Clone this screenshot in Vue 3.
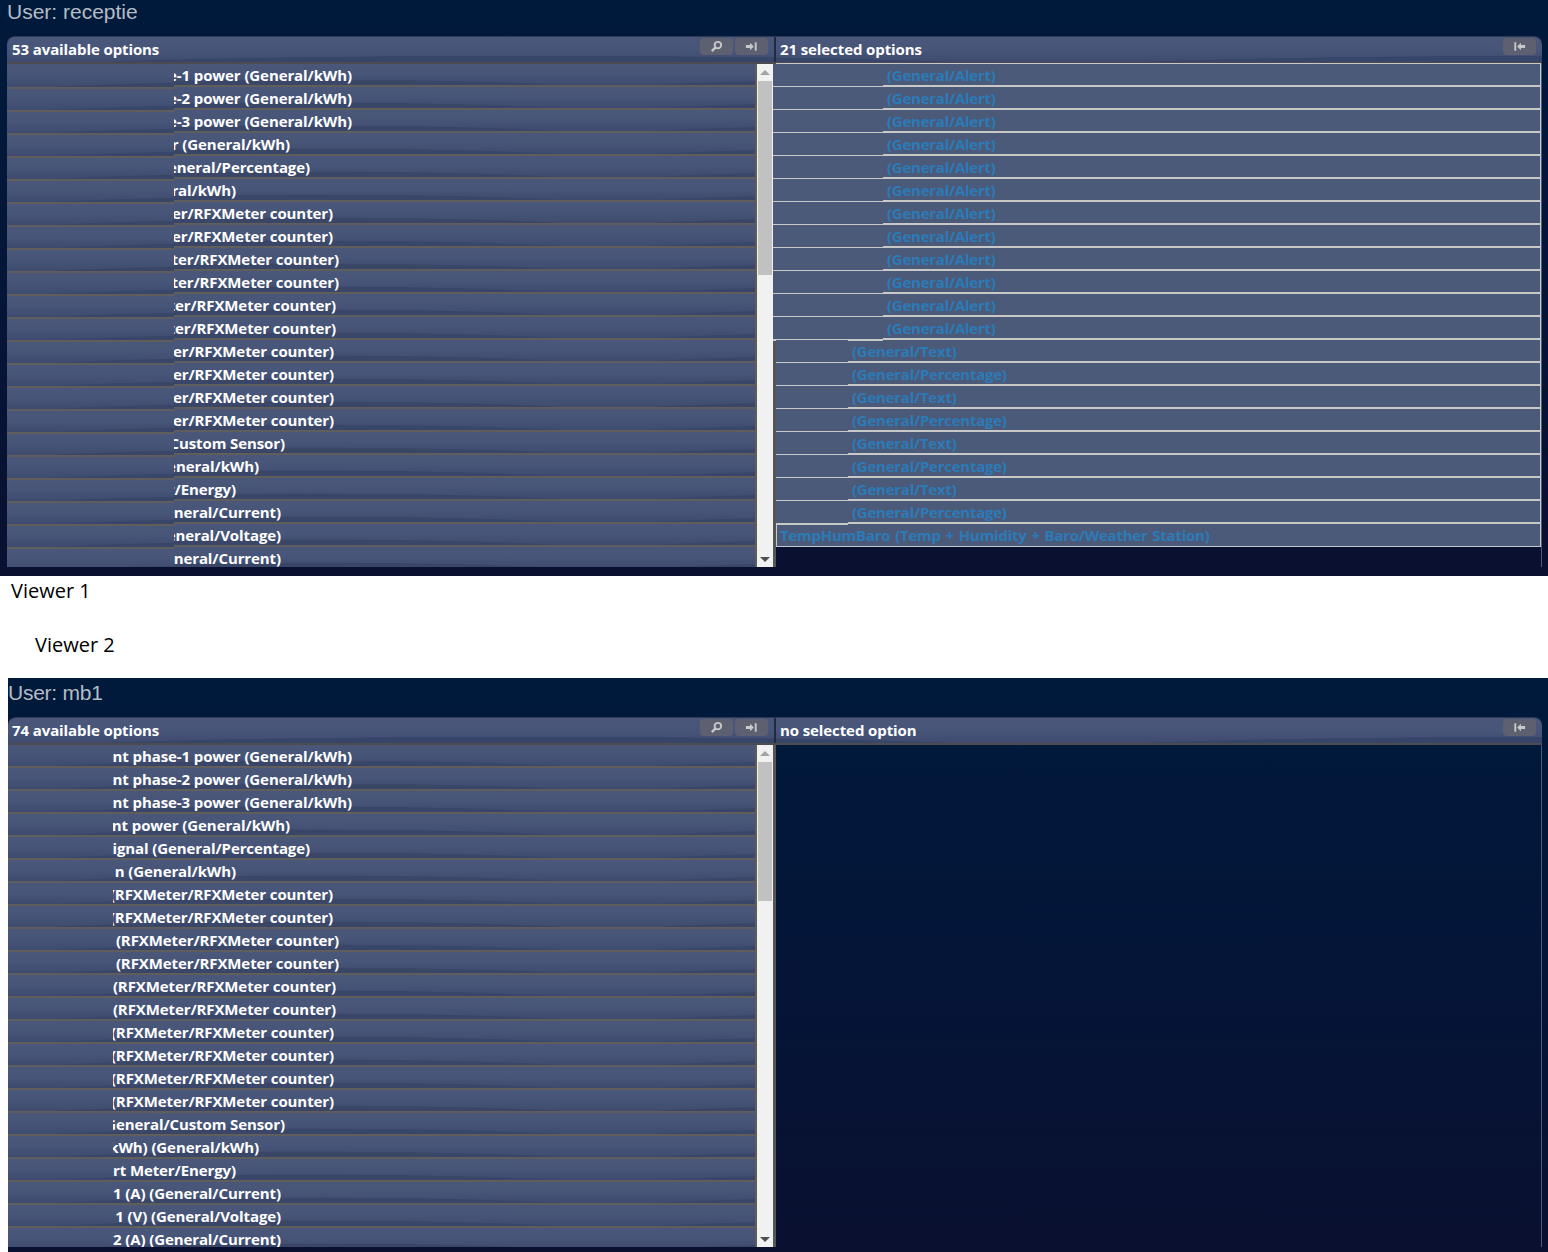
<script setup>
const rows = [
  ['nt phase-1 power (General/kWh)', 352],
  ['nt phase-2 power (General/kWh)', 352],
  ['nt phase-3 power (General/kWh)', 352],
  ['nt power (General/kWh)', 290],
  ['ignal (General/Percentage)', 310],
  ['n (General/kWh)', 236],
  ['(RFXMeter/RFXMeter counter)', 333],
  ['(RFXMeter/RFXMeter counter)', 333],
  ['(RFXMeter/RFXMeter counter)', 339],
  ['(RFXMeter/RFXMeter counter)', 339],
  ['(RFXMeter/RFXMeter counter)', 336],
  ['(RFXMeter/RFXMeter counter)', 336],
  ['(RFXMeter/RFXMeter counter)', 334],
  ['(RFXMeter/RFXMeter counter)', 334],
  ['(RFXMeter/RFXMeter counter)', 334],
  ['(RFXMeter/RFXMeter counter)', 334],
  ['General/Custom Sensor)', 285],
  ['kWh) (General/kWh)', 259],
  ['rt Meter/Energy)', 236],
  ['1 (A) (General/Current)', 281],
  ['1 (V) (General/Voltage)', 281],
  ['2 (A) (General/Current)', 281],
]

const selected = [
  ...Array(12).fill({ text: '(General/Alert)', kind: 'a' }),
  { text: '(General/Text)', kind: 'b' },
  { text: '(General/Percentage)', kind: 'b' },
  { text: '(General/Text)', kind: 'b' },
  { text: '(General/Percentage)', kind: 'b' },
  { text: '(General/Text)', kind: 'b' },
  { text: '(General/Percentage)', kind: 'b' },
  { text: '(General/Text)', kind: 'b' },
  { text: '(General/Percentage)', kind: 'b' },
  { text: 'TempHumBaro (Temp + Humidity + Baro/Weather Station)', kind: 'c' },
]
</script>

<template>
  <div class="page">
    <section class="block first">
      <div class="user">User: receptie</div>
      <div class="select">
        <div class="heads">
          <div class="head left">
            <span>53 available options</span>
            <div class="btns">
              <button class="btn"><svg viewBox="0 0 16 16" width="15" height="15"><circle cx="9.500" cy="6.500" r="3.500" fill="none" stroke="#c8c8c8" stroke-width="2"/><path d="M7 9L3 13" stroke="#c8c8c8" stroke-width="2.600"/></svg></button>
              <button class="btn"><svg viewBox="0 0 16 16" width="15" height="15"><path d="M2 6.500h4.500V4L10.500 8 6.500 12V9.500H2z" fill="#c8c8c8"/><rect x="11.500" y="3.500" width="2" height="9" fill="#c8c8c8"/></svg></button>
            </div>
          </div>
          <div class="head right">
            <span>21 selected options</span>
            <button class="btn"><svg viewBox="0 0 16 16" width="15" height="15"><rect x="2.500" y="3.500" width="2" height="9" fill="#c8c8c8"/><path d="M14 6.500H9.500V4L5.500 8 9.500 12V9.500H14z" fill="#c8c8c8"/></svg></button>
          </div>
        </div>
        <div class="lists h503">
          <div class="avail">
            <div class="rows">
              <div v-for="(r, i) in rows" :key="i" class="row">
                <div class="patch p1"></div>
                <div class="clip" :style="{ width: r[1] - 174 + 'px', marginLeft: '167px' }"><span>{{ r[0] }}</span></div>
              </div>
            </div>
            <div class="bar">
              <i class="up"></i><b class="thumb t1"></b><i class="down"></i>
            </div>
          </div>
          <div class="sel">
            <div v-for="(s, i) in selected" :key="i" class="srow" :class="s.kind">
              <div v-if="s.kind !== 'c'" class="spatch"></div>
              <span class="stext">{{ s.text }}</span>
            </div>
          </div>
        </div>
      </div>
    </section>

    <div class="viewers">
      <div class="v1">Viewer 1</div>
      <div class="v2">Viewer 2</div>
    </div>

    <section class="block second">
      <div class="user">User: mb1</div>
      <div class="select">
        <div class="heads">
          <div class="head left">
            <span>74 available options</span>
            <div class="btns">
              <button class="btn"><svg viewBox="0 0 16 16" width="15" height="15"><circle cx="9.500" cy="6.500" r="3.500" fill="none" stroke="#c8c8c8" stroke-width="2"/><path d="M7 9L3 13" stroke="#c8c8c8" stroke-width="2.600"/></svg></button>
              <button class="btn"><svg viewBox="0 0 16 16" width="15" height="15"><path d="M2 6.500h4.500V4L10.500 8 6.500 12V9.500H2z" fill="#c8c8c8"/><rect x="11.500" y="3.500" width="2" height="9" fill="#c8c8c8"/></svg></button>
            </div>
          </div>
          <div class="head right">
            <span>no selected option</span>
            <button class="btn"><svg viewBox="0 0 16 16" width="15" height="15"><rect x="2.500" y="3.500" width="2" height="9" fill="#c8c8c8"/><path d="M14 6.500H9.500V4L5.500 8 9.500 12V9.500H14z" fill="#c8c8c8"/></svg></button>
          </div>
        </div>
        <div class="lists h502">
          <div class="avail">
            <div class="rows">
              <div v-for="(r, i) in rows" :key="i" class="row">
                <div class="patch p2"></div>
                <div class="clip" :style="{ width: r[1] - 113 + 'px', marginLeft: '105px' }"><span>{{ r[0] }}</span></div>
              </div>
            </div>
            <div class="bar">
              <i class="up"></i><b class="thumb t2"></b><i class="down"></i>
            </div>
          </div>
          <div class="sel"></div>
        </div>
      </div>
    </section>
  </div>
</template>

<style>
html, body { margin: 0; background: #fff; }
</style>

<style scoped>
.page { width: 1548px; height: 1252px; overflow: hidden; font-family: "Open Sans", sans-serif; }
.block { background: linear-gradient(180deg, #001a3c 0%, #041538 50%, #0a1030 100%); box-sizing: border-box; }
.first { height: 576px; padding-left: 7px; }
.second { height: 574px; margin-left: 8px; }
.user { font: 21px/24px "Liberation Sans", sans-serif; color: #b4bcc4; height: 36px; }
.second .user { height: 39px; line-height: 30px; letter-spacing: -0.25px; }
.select { width: 1535px; }
.second .select { width: 1534px; }

.heads { display: flex; height: 28px; box-sizing: border-box; border-radius: 8px 8px 0 0; overflow: hidden; border-top: 1px solid #2e3a55; border-bottom: 2px solid #4c4c50;
  background:
    radial-gradient(ellipse 520px 14px at 50% 130%, #38456a 96%, rgba(56, 69, 106, 0) 100%) 0 0 / 1040px 100%,
    linear-gradient(180deg, #4a5779 0%, #47557a 50%, #3e4b6e 100%); }
.head { display: flex; align-items: center; justify-content: space-between; box-sizing: border-box; height: 25px; color: #fff; font-size: 15px; font-weight: 700; letter-spacing: -0.1px; padding: 0 6px 2px 5px; }
.head.left { width: 769px; border-right: 2px solid #23293f; }
.second .head.left { width: 768px; padding-left: 4px; }
.head.right { flex: 1; padding-left: 4px; }
.btns { display: flex; gap: 2px; }
.btn { width: 33px; height: 17px; padding: 0; border: 0; border-radius: 4px; background: #5c6070; display: flex; align-items: center; justify-content: center; margin-top: -4px; }

.lists { display: flex; }
.h503 { height: 503px; }
.h502 { height: 502px; }
.avail { display: flex; width: 766px; height: 100%; overflow: hidden; flex: none; border-right: 3px solid #565656; box-sizing: content-box; }
.second .avail { width: 765px; }
.rows { flex: 1; min-width: 0; border-right: 2px solid #5c5c5c; overflow: hidden; }
.row, .patch {
  background:
    radial-gradient(ellipse 300px 11px at 50% 125%, #394668 94%, rgba(57, 70, 104, 0) 100%) 0 0 / 600px 100%,
    linear-gradient(180deg, #4a5779 0%, #475578 45%, #3e4b6e 100%);
}
.row { position: relative; display: flex; height: 23px; box-sizing: border-box; border-bottom: 2px solid #5f5e5c; }
.patch { position: absolute; left: 0; top: 2px; height: 23px; box-sizing: border-box; border-bottom: 2px solid #5f5e5c; z-index: 1; }
.p1 { width: 167px; }
.p2 { width: 105px; top: 0; }
.clip { display: flex; justify-content: flex-end; overflow: hidden; white-space: nowrap; color: #fff; font-size: 15px; font-weight: 700; letter-spacing: -0.1px; line-height: 23px; flex: none; }
.clip span { flex: none; }

.bar { position: relative; width: 16px; flex: none; background: #f1f1f1; }
.thumb { position: absolute; left: 1px; right: 1px; top: 17px; background: #c1c1c1; display: block; }
.t1 { height: 194px; }
.t2 { height: 139px; }
.up, .down { position: absolute; left: 3px; width: 0; height: 0; border-left: 5px solid transparent; border-right: 5px solid transparent; }
.up { top: 6px; border-bottom: 5px solid #a3a3a3; }
.down { bottom: 5px; border-top: 5px solid #505050; }

.sel { flex: 1; min-width: 0; border-right: 1px solid #4e5a78; }
.srow { position: relative; height: 23px; box-sizing: border-box; background: #4b5a78; border-bottom: 2px solid #c8c8c8; border-right: 1px solid #c8c8c8; color: #2b7bb9; font-size: 15px; font-weight: 700; letter-spacing: -0.25px; line-height: 23px; white-space: nowrap; }
.srow:first-child { border-top: 1px solid #c8c8c8; margin-top: -1px; height: 24px; }
.spatch { position: absolute; top: 0; height: 24px; box-sizing: border-box; background: #4b5a78; border-bottom: 2px solid #c8c8c8; z-index: 1; }
.a .spatch { left: -3px; width: 110px; }
.b .spatch { left: 0; width: 72px; }
.srow.c { border-left: 1px solid #c8c8c8; height: 23px; border-bottom-width: 1px; line-height: 23px; word-spacing: 1.2px; }
.stext { position: relative; z-index: 2; }
.a .stext { margin-left: 111px; }
.b .stext { margin-left: 76px; }
.c .stext { margin-left: 3px; }

.viewers { height: 102px; font-size: 20px; color: #000; }
.v1 { padding: 1px 0 0 11px; height: 55px; line-height: 28px; box-sizing: border-box; }
.v2 { padding-left: 35px; line-height: 28px; }
</style>
